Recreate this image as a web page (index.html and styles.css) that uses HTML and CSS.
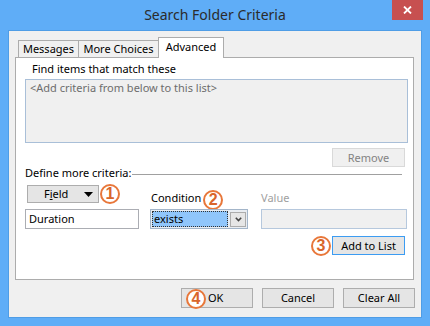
FILE: index.html
```html
<!DOCTYPE html>
<html>
<head>
<meta charset="utf-8">
<link rel="stylesheet" href="styles.css">
</head>
<body>
<div class="window">
  <div class="titlebar">
    <span></span>
    <div class="title">Search Folder Criteria</div>
    <div class="close">
      <svg width="9" height="8" viewBox="0 0 9 8"><path d="M1 0.5 L8 7.5 M8 0.5 L1 7.5" stroke="#fff" stroke-width="1.8" fill="none"/></svg>
    </div>
  </div>
  <div class="client">
    <div class="tabs">
      <div class="tab t1">Messages</div>
      <div class="tab t2">More Choices</div>
      <div class="tab t3 active">Advanced</div>
    </div>
    <div class="panel">
      <div class="find">Find items that match these</div>
      <div class="listbox">&lt;Add criteria from below to this list&gt;</div>
      <div class="remove-row"><div class="btn disabled remove">Remove</div></div>
      <div class="define"><span>Define more criteria:</span><div class="rule"></div></div>
      <div class="criteria">
        <div class="cell field-cell">
          <div class="btn field"><span class="field-text">F<u>i</u>eld</span><svg class="tri" width="9" height="5" viewBox="0 0 9 5"><path d="M0 0 H9 L4.5 5 Z" fill="#000"/></svg></div>
          <span class="num n1">1</span>
        </div>
        <div class="cell cond-cell"><span class="cond">Condition</span><span class="num n2">2</span></div>
        <div class="cell value-lbl">Value</div>
        <div class="cell"><div class="textbox duration">Duration</div></div>
        <div class="cell">
          <div class="combo">
            <div class="combo-sel">exists</div>
            <div class="combo-btn"><svg width="7" height="5" viewBox="0 0 7 5"><path d="M0.8 0.8 L3.5 3.6 L6.2 0.8" stroke="#444" stroke-width="1.6" fill="none"/></svg></div>
          </div>
        </div>
        <div class="cell"><div class="textbox disabled-box"></div></div>
        <div class="cell add-cell"><span class="num n3">3</span><div class="btn default add">Add to List</div></div>
      </div>
    </div>
    <div class="footer">
      <div class="btn ok"><span class="num n4">4</span><span class="ok-text">OK</span></div>
      <div class="btn">Cancel</div>
      <div class="btn">Clear All</div>
    </div>
  </div>
</div>
</body>
</html>
```

FILE: styles.css
```css
* { box-sizing: border-box; }
html, body { margin: 0; padding: 0; }
body {
  font-family: "Noto Sans", "Liberation Sans", sans-serif;
  font-size: 11px;
  color: #000;
}
.window {
  width: 430px;
  height: 326px;
  background: #5fadf7;
  display: flex;
  flex-direction: column;
}
.titlebar {
  height: 30px;
  display: grid;
  grid-template-columns: 1fr auto 1fr;
}
.title {
  font-size: 14px;
  color: #2b2b2b;
  line-height: 30px;
}
.close {
  justify-self: end;
  align-self: start;
  margin-right: 7px;
  width: 31px;
  height: 20px;
  background: #c75050;
  display: flex;
  align-items: center;
  justify-content: center;
}
.client {
  margin: 0 8px 8px 8px;
  height: 288px;
  background: #f0f0f0;
  border: 1px solid #4f9de6;
  display: flex;
  flex-direction: column;
}
.tabs {
  display: flex;
  align-items: flex-end;
  margin: 6px 0 0 9px;
  height: 20px;
}
.tab {
  height: 17px;
  border: 1px solid #acacac;
  border-bottom: none;
  background: #f0f0f0;
  text-align: center;
  line-height: 16px;
  white-space: nowrap;
}
.t1 { width: 61px; }
.t2 { width: 81px; margin-left: -1px; }
.t3 { width: 66px; margin-left: -1px; }
.tab.active {
  height: 21px;
  margin-bottom: -1px;
  background: #fff;
  position: relative;
  z-index: 1;
  line-height: 18px;
}
.panel {
  margin-left: 6px;
  width: 399px;
  height: 223px;
  border: 1px solid #acacac;
  background: #fff;
  display: flex;
  flex-direction: column;
}
.find {
  margin: 4px 0 0 16px;
  line-height: 14px;
}
.listbox {
  margin: 3px 0 0 9px;
  width: 383px;
  height: 64px;
  border: 1px solid #a9bfd8;
  background: #f0f0f0;
  color: #6d6d6d;
  padding: 1px 0 0 4px;
  line-height: 14px;
}
.remove-row {
  display: flex;
  justify-content: flex-end;
  margin: 5px 8px 0 0;
}
.btn {
  height: 20px;
  width: 72px;
  border: 1px solid #adadad;
  background: #e5e5e5;
  display: flex;
  align-items: center;
  justify-content: center;
  line-height: 14px;
  white-space: nowrap;
}
.remove {
  width: 73px;
  height: 19px;
}
.btn.disabled {
  border-color: #d9d9d9;
  background: #f0f0f0;
  color: #838383;
}
.define {
  display: flex;
  align-items: center;
  margin: -1px 11px 0 9px;
  height: 14px;
  line-height: 14px;
}
.rule {
  flex: 1;
  height: 1px;
  background: #a0a0a0;
  margin-left: 1px;
  margin-top: 2px;
}
.criteria {
  margin: 4px 0 0 9px;
  display: grid;
  grid-template-columns: 125px 111px 146px;
  grid-template-rows: 25px 20px 26px;
}
.cell {
  display: flex;
  align-items: flex-start;
}
.field-cell { padding-top: 1px; }
.field {
  margin-left: 2px;
  width: 72px;
  height: 18px;
  justify-content: flex-start;
}
.field-text { margin-left: 16px; }
.tri { margin-left: 16px; }
.num {
  width: 20px;
  height: 20px;
  border: 2px solid #e8773a;
  border-radius: 50%;
  background: #fff;
  color: #d9652b;
  font-family: "Liberation Sans", sans-serif;
  font-weight: bold;
  font-size: 16px;
  line-height: 16px;
  text-align: center;
  flex: none;
}
.n1 { margin: -1px 0 0 1px; }
.cond-cell { padding-top: 6px; align-items: center; }
.cond { margin-left: 1px; margin-top: -3px; line-height: 14px; }
.n2 { margin-left: 2px; }
.value-lbl {
  color: #a0a0a0;
  padding-top: 7px;
  line-height: 14px;
}
.textbox {
  height: 20px;
  border: 1px solid #abadb3;
  background: #fff;
  line-height: 17px;
  padding-left: 3px;
}
.duration { width: 114px; }
.disabled-box {
  width: 146px;
  border-color: #b6c8dd;
  background: #f0f0f0;
}
.combo {
  width: 98px;
  height: 20px;
  border: 1px solid #a3b5c9;
  background: #e9edf2;
  display: flex;
  align-items: center;
  padding: 1px;
}
.combo-sel {
  width: 77px;
  height: 16px;
  background: #90c6fb;
  border: 1px dotted #333;
  line-height: 13px;
  padding-left: 1px;
}
.combo-btn {
  width: 16px;
  height: 15px;
  margin-left: 2px;
  border: 1px solid #acacac;
  background: #e6e6e6;
  display: flex;
  align-items: center;
  justify-content: center;
}
.add-cell {
  grid-column: 3;
  justify-content: flex-end;
  padding: 7px 2px 0 0;
}
.n3 { margin-right: 1px; }
.add {
  width: 73px;
  height: 19px;
}
.btn.default { border-color: #3c9cf2; }
.footer {
  display: flex;
  justify-content: flex-end;
  gap: 9px;
  margin: 8px 6px 0 0;
}
.ok {
  justify-content: flex-start;
  align-items: flex-start;
}
.n4 { margin-left: 4px; margin-right: 2px; }
.ok-text { line-height: 18px; }
```
